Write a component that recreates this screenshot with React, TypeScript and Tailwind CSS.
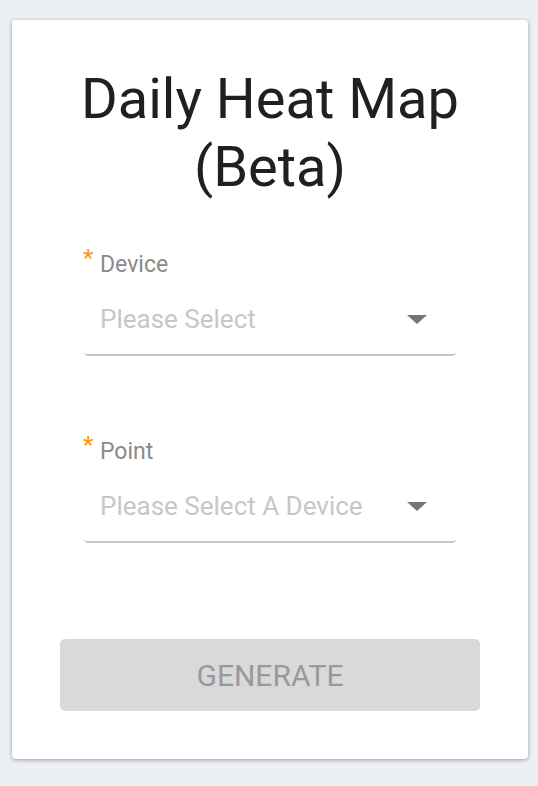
import { ReactNode } from "react";

function Field({ label, placeholder }: { label: string; placeholder: string }) {
    return (
        <div className="flex flex-col w-[372px]">
            <div className="flex items-start h-[24px]">
                <span className="text-[#ff9800] text-[24px] leading-[24px] w-[17px] -ml-[1px] -mt-[7px]">*</span>
                <span className="text-[#8a8a8a] text-[23px] leading-[24px]">{label}</span>
            </div>
            <div className="flex items-center justify-between mt-[27px] pb-[20px] pl-[16px] pr-[29px] border-b-2 border-[#c8c8c8] rounded-b-[4px]">
                <span className="text-[#c7c7c7] text-[26px] leading-[30px]">{placeholder}</span>
                <svg width="20" height="9" viewBox="0 0 20 9">
                    <path d="M0 0 L20 0 L10 9 Z" fill="#757575" />
                </svg>
            </div>
        </div>
    );
}

function Card({ children }: { children: ReactNode }) {
    return (
        <div className="bg-white rounded-[4px] shadow-[0_1px_4px_rgba(0,0,0,0.35)] w-[516px] h-[739px] flex flex-col items-center">
            {children}
        </div>
    );
}

export default function App() {
    return (
        <div className="min-h-[786px] bg-[#eceff3] pt-[20px] pl-[12px] font-['Roboto',sans-serif]">
            <Card>
                <h1 className="text-[#202020] text-[56px] leading-[68px] text-center mt-[45px] w-[440px]">
                    Daily Heat Map (Beta)
                </h1>
                <div className="flex flex-col gap-[84px] mt-[52px]">
                    <Field label="Device" placeholder="Please Select" />
                    <Field label="Point" placeholder="Please Select A Device" />
                </div>
                <button
                    disabled
                    className="mt-[96px] w-[420px] h-[72px] rounded-[5px] bg-[#d9d9d9] text-[#999999] text-[30px] uppercase"
                >
                    Generate
                </button>
            </Card>
        </div>
    );
}
